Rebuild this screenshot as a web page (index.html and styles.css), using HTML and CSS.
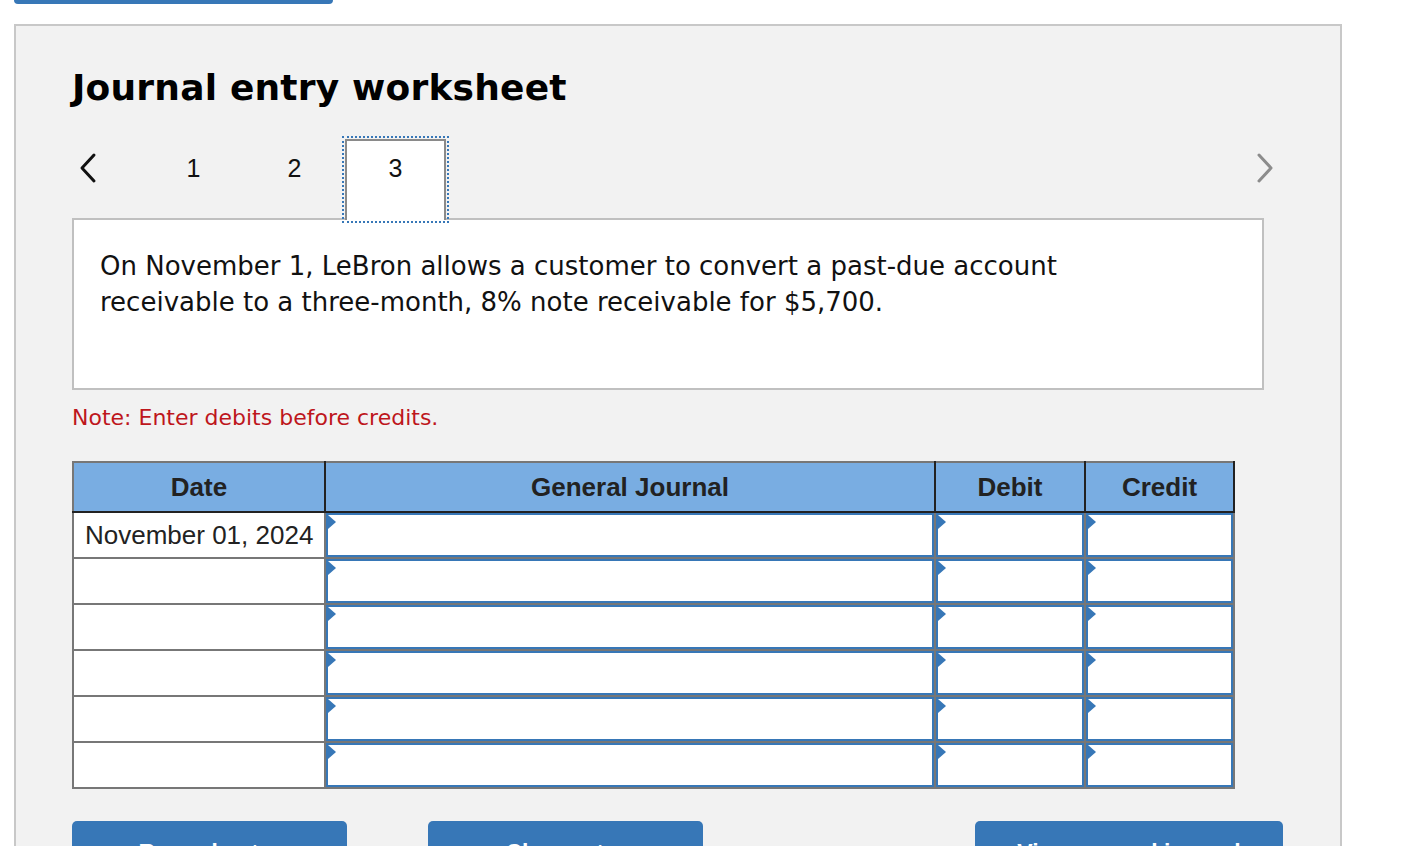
FILE: index.html
```html
<!DOCTYPE html>
<html lang="en">
  <head>
    <meta charset="UTF-8" />
    <meta name="viewport" content="width=device-width, initial-scale=1.0" />
    <title>Journal entry worksheet</title>
    <link rel="stylesheet" href="styles.css">
  </head>
  <body>
    <div class="top-btn"></div>

    <div class="panel">
      <h1 class="title">Journal entry worksheet</h1>

      <!-- Step tabs -->
      <div class="tabs">
        <button class="nav-btn prev" aria-label="Previous">
          <svg width="20" height="32" viewBox="0 0 20 32">
            <polyline points="16,3 4,16 16,29" fill="none" stroke="#111" stroke-width="3" stroke-linecap="round" stroke-linejoin="round" />
          </svg>
        </button>
        <div class="tab">1</div>
        <div class="tab">2</div>
        <div class="tab active">3</div>
        <button class="nav-btn next" aria-label="Next">
          <svg width="20" height="32" viewBox="0 0 20 32">
            <polyline points="4,3 16,16 4,29" fill="none" stroke="#8c8c8c" stroke-width="3" stroke-linecap="round" stroke-linejoin="round" />
          </svg>
        </button>
      </div>

      <div class="question">
        On November 1, LeBron allows a customer to convert a past-due account<br />
        receivable to a three-month, 8% note receivable for $5,700.
      </div>

      <p class="note">Note: Enter debits before credits.</p>

      <table class="journal">
        <colgroup>
          <col class="col-date" />
          <col class="col-gj" />
          <col class="col-amt" />
          <col class="col-last" />
        </colgroup>
        <thead>
          <tr>
            <th>Date</th>
            <th>General Journal</th>
            <th>Debit</th>
            <th>Credit</th>
          </tr>
        </thead>
        <tbody id="journalBody"></tbody>
      </table>

      <div class="actions">
        <button class="action-btn">Record entry</button>
        <button class="action-btn">Clear entry</button>
        <button class="action-btn wide">View general journal</button>
      </div>
    </div>

    <script>
      // build the six journal rows
      const rows = ["November 01, 2024", "", "", "", "", ""];
      const body = document.getElementById("journalBody");
      rows.forEach((date) => {
        const tr = document.createElement("tr");
        tr.innerHTML = `
          <td class="date-cell">${date}</td>
          <td><div class="input"></div></td>
          <td><div class="input"></div></td>
          <td><div class="input"></div></td>
        `;
        body.appendChild(tr);
      });
    </script>
  </body>
</html>
```

FILE: styles.css
```css
* {
  margin: 0;
  padding: 0;
  box-sizing: border-box;
}

body {
  font-family: "DejaVu Sans", Verdana, sans-serif;
  background-color: #fff;
  color: #111;
}

.top-btn {
  width: 319px;
  height: 4px;
  margin-left: 14px;
  background-color: #3777b7;
  border-radius: 0 0 4px 4px;
}

.panel {
  width: 1328px;
  margin: 20px 0 0 14px;
  padding: 42px 0 0 56px;
  background-color: #f2f2f2;
  border: 2px solid #c8c8c8;
  min-height: 900px;
}

.title {
  font-size: 36px;
  line-height: 40px;
  font-weight: bold;
  letter-spacing: 0.2px;
  color: #000;
}

/* Tabs */
.tabs {
  display: flex;
  align-items: stretch;
  height: 81px;
  margin-top: 31px;
  margin-bottom: -2px;
  width: 1208px;
}

.nav-btn {
  border: none;
  background: none;
  display: flex;
  align-items: center;
  padding-bottom: 24px;
  cursor: pointer;
}

.nav-btn.prev {
  width: 71px;
  padding-left: 6px;
}

.nav-btn.next {
  margin-left: auto;
  margin-right: 5px;
}

.tab {
  width: 101px;
  display: flex;
  justify-content: center;
  align-items: center;
  padding-bottom: 24px;
  font-family: "Liberation Sans", Arial, sans-serif;
  font-size: 25px;
  color: #111;
  border: 2px solid transparent;
  border-bottom: none;
}

.tab.active {
  position: relative;
  z-index: 1;
  background-color: #fff;
  border-color: #8a8a8a;
  outline: 2px dotted #3777b7;
  outline-offset: 1px;
}

/* Question */
.question {
  width: 1192px;
  height: 172px;
  padding: 28px 26px;
  background-color: #fff;
  border: 2px solid #c0c0c0;
  font-size: 26px;
  line-height: 36px;
  color: #111;
}

.note {
  margin-top: 16px;
  font-size: 22px;
  line-height: 24px;
  color: #be161c;
}

/* Journal table */
.journal {
  margin-top: 31px;
  border-collapse: collapse;
  font-family: "Liberation Sans", Arial, sans-serif;
  border: 2px solid #777;
  table-layout: fixed;
  width: 1161px;
}

.col-date {
  width: 252px;
}

.col-gj {
  width: 610px;
}

.col-amt {
  width: 150px;
}

.col-last {
  width: 149px;
}

.journal th {
  height: 50px;
  background-color: #79ade2;
  color: #222;
  font-size: 26px;
  font-weight: bold;
  border: 2px solid #222;
  border-top-color: #777;
}

.journal th:first-child {
  border-left-color: #777;
}

.journal td {
  height: 46px;
  padding: 0;
  border: 2px solid #777;
  background-color: #fff;
}

.journal .date-cell {
  padding-left: 11px;
  font-size: 26px;
  color: #222;
}

.input {
  position: relative;
  height: 44px;
  border: 2px solid #3777b7;
  background-color: #fff;
}

.input::before {
  content: "";
  position: absolute;
  top: 0;
  left: 0;
  border-left: 8px solid #3777b7;
  border-top: 7px solid transparent;
  border-bottom: 7px solid transparent;
}

/* Buttons */
.actions {
  display: flex;
  gap: 81px;
  margin-top: 32px;
}

.action-btn {
  width: 275px;
  padding: 17px 0 12px;
  border: none;
  border-radius: 5px;
  background-color: #3777b7;
  color: #fff;
  font-family: "Liberation Sans", Arial, sans-serif;
  font-size: 23px;
  line-height: 30px;
  font-weight: bold;
  cursor: pointer;
}

.action-btn.wide {
  width: 308px;
  margin-left: 191px;
}
```
